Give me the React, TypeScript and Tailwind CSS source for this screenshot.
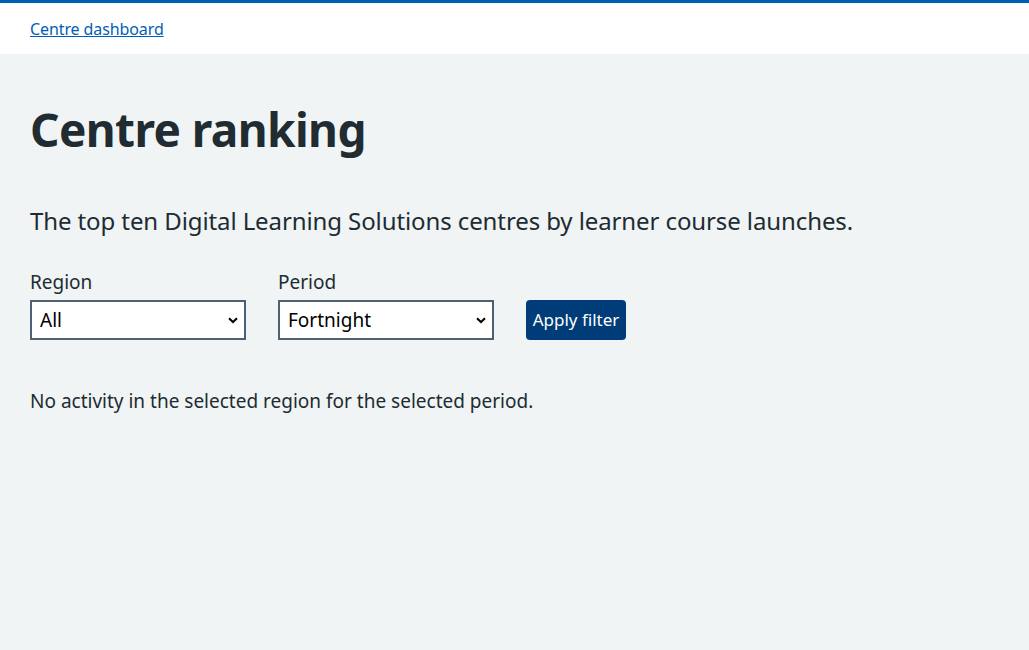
import React from "react";

export default function App() {
  const font = { fontFamily: '"Noto Sans", "Open Sans", sans-serif' };
  return (
    <div className="min-h-[650px] bg-[#f0f4f5] text-[#212b32]" style={font}>
      <div className="h-[3px] bg-[#005eb8]" />
      <header className="bg-white h-[51px] flex items-center px-[30px]">
        <a href="#" className="text-[#005eb8] underline text-[16px] leading-none tracking-[-0.1px]">
          Centre dashboard
        </a>
      </header>
      <main className="px-[30px]">
        <h1 className="text-[46px] font-bold leading-none pt-[52px] tracking-[-0.6px]">Centre ranking</h1>
        <p className="text-[24px] mt-[57px] leading-none tracking-[-0.1px]">
          The top ten Digital Learning Solutions centres by learner course launches.
        </p>
        <form className="flex items-end gap-[32px] mt-[40px]">
          <div className="flex flex-col">
            <label className="text-[19px] leading-none mb-[8px]">Region</label>
            <div className="relative w-[216px] h-[40px] bg-white border-2 border-[#4c6272] flex items-center px-[8px]">
              <span className="text-[19px] text-black">All</span>
              <svg className="absolute right-[6px] top-[15px]" width="10" height="7" viewBox="0 0 10 7">
                <path d="M1 1.2 L5 5 L9 1.2" stroke="#000" strokeWidth="2" fill="none" />
              </svg>
            </div>
          </div>
          <div className="flex flex-col">
            <label className="text-[19px] leading-none mb-[8px]">Period</label>
            <div className="relative w-[216px] h-[40px] bg-white border-2 border-[#4c6272] flex items-center px-[8px]">
              <span className="text-[19px] text-black">Fortnight</span>
              <svg className="absolute right-[6px] top-[15px]" width="10" height="7" viewBox="0 0 10 7">
                <path d="M1 1.2 L5 5 L9 1.2" stroke="#000" strokeWidth="2" fill="none" />
              </svg>
            </div>
          </div>
          <button type="button" className="w-[100px] h-[40px] bg-[#003d78] text-white rounded-[4px] text-[17px]">
            Apply filter
          </button>
        </form>
        <p className="text-[19px] mt-[52px] leading-none">
          No activity in the selected region for the selected period.
        </p>
      </main>
    </div>
  );
}
